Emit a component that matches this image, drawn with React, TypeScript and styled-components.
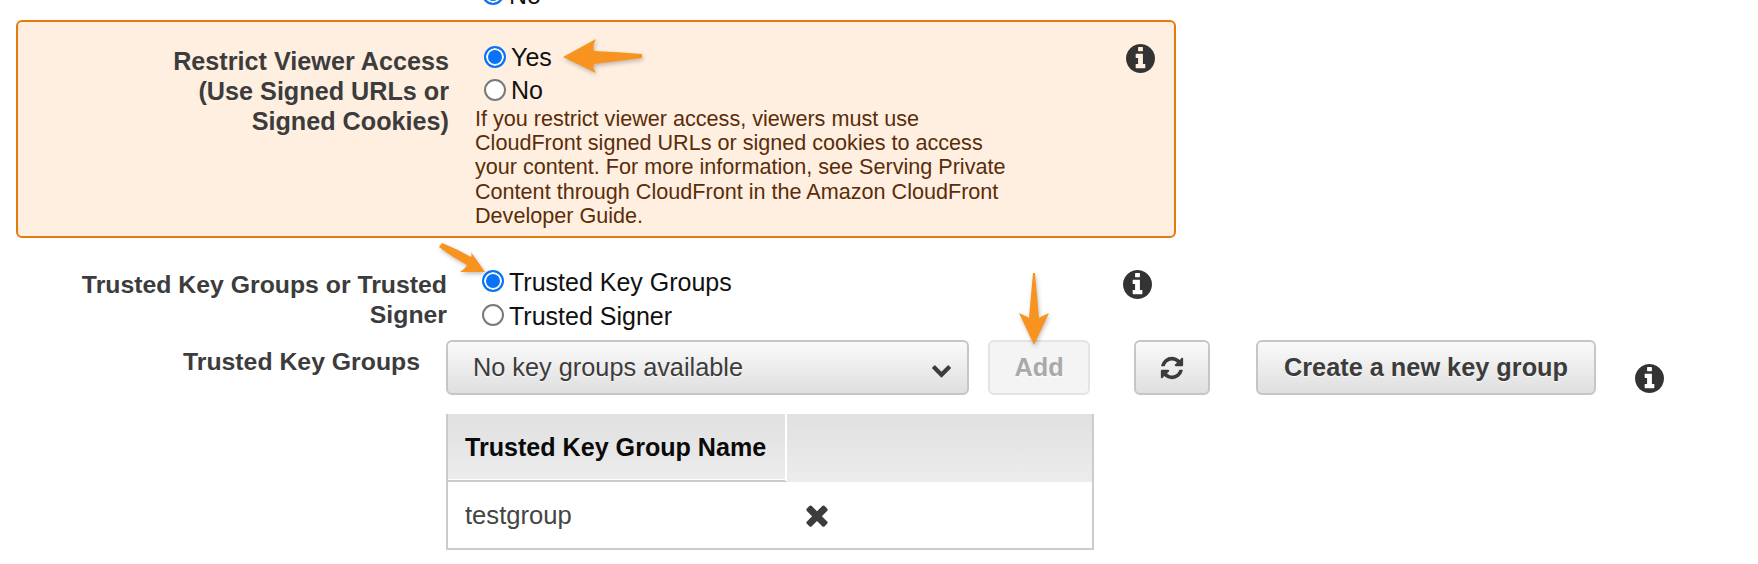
import React from "react";
import styled, { createGlobalStyle } from "styled-components";

const GlobalStyle = createGlobalStyle`
  html, body {
    margin: 0;
    padding: 0;
    background: #fff;
    font-family: "Liberation Sans", Arial, sans-serif;
  }
`;

const ICONS = {
  info: {
    box: "128 128 1536 1536",
    d: "M1152 1376v-160q0-14-9-23t-23-9h-96v-512q0-14-9-23t-23-9h-320q-14 0-23 9t-9 23v160q0 14 9 23t23 9h96v320h-96q-14 0-23 9t-9 23v160q0 14 9 23t23 9h448q14 0 23-9t9-23zm-128-896v-160q0-14-9-23t-23-9h-192q-14 0-23 9t-9 23v160q0 14 9 23t23 9h192q14 0 23-9t9-23zm640 416q0 209-103 385.500t-279.500 279.500-385.500 103-385.500-103-279.500-279.500-103-385.500 103-385.500 279.500-279.500 385.500-103 385.500 103 279.500 279.500 103 385.500z",
  },
  refresh: {
    box: "0 0 1792 1792",
    d: "M1639 1056q0 5-1 7-64 268-268 434.500t-478 166.500q-146 0-282.500-55t-243.500-157l-129 129q-19 19-45 19t-45-19-19-45v-448q0-26 19-45t45-19h448q26 0 45 19t19 45-19 45l-137 137q71 66 161 102t187 36q134 0 250-65t186-179q11-17 53-117 8-23 30-23h192q13 0 22.500 9.500t9.500 22.500zm25-800v448q0 26-19 45t-45 19h-448q-26 0-45-19t-19-45 19-45l138-138q-148-137-349-137-134 0-250 65t-186 179q-11 17-53 117-8 23-30 23h-199q-13 0-22.500-9.500t-9.500-22.500v-7q65-268 270-434.500t480-166.500q146 0 284 55.500t245 156.500l130-129q19-19 45-19t45 19 19 45z",
  },
  times: {
    box: "0 0 1792 1792",
    d: "M1490 1322q0 40-28 68l-136 136q-28 28-68 28t-68-28l-294-294-294 294q-28 28-68 28t-68-28l-136-136q-28-28-28-68t28-68l294-294-294-294q-28-28-28-68t28-68l136-136q28-28 68-28t68 28l294 294 294-294q28-28 68-28t68 28l136 136q28 28 28 68t-28 68l-294 294 294 294q28 28 28 68z",
  },
  chevron: {
    box: "0 0 1792 1792",
    d: "M1683 808l-742 741q-19 19-45 19t-45-19l-742-741q-19-19-19-45.500t19-45.500l166-165q19-19 45-19t45 19l531 531 531-531q19-19 45-19t45 19l166 165q19 19 19 45.500t-19 45.500z",
  },
};

type IconName = keyof typeof ICONS;

function Glyph({ name, className }: { name: IconName; className?: string }) {
  return (
    <svg className={className} viewBox={ICONS[name].box} fill="currentColor">
      <path d={ICONS[name].d} />
    </svg>
  );
}

const Page = styled.div`
  position: relative;
  width: 1758px;
  height: 564px;
  overflow: hidden;
  background: #fff;
`;

const ClippedRow = styled.div`
  height: 5px;
  padding-left: 482px;
  margin-bottom: 15px;
  overflow: hidden;
  display: flex;
  align-items: flex-end;
`;

const Panel = styled.section`
  box-sizing: border-box;
  width: 1160px;
  height: 218px;
  margin-left: 16px;
  padding: 18px 19px 0 0;
  display: flex;
  align-items: flex-start;
  background: #ffefe0;
  border: 2px solid #e57b0c;
  border-radius: 6px;
`;

const Label = styled.div<{ $width: number }>`
  flex: none;
  box-sizing: border-box;
  width: ${(p) => p.$width}px;
  text-align: right;
  font-size: 24.8px;
  line-height: 30px;
  font-weight: 700;
  color: #3c3c3c;
`;

const PanelLabel = styled(Label)`
  margin-top: 6px;
  font-size: 25.2px;
`;

const Field = styled.div<{ $left: number }>`
  flex: none;
  margin-left: ${(p) => p.$left}px;
`;

const RadioRow = styled.label<{ $h: number; $indent?: number }>`
  display: flex;
  align-items: center;
  gap: 5px;
  height: ${(p) => p.$h}px;
  margin-left: ${(p) => p.$indent ?? 0}px;
  font-size: 25px;
  color: #111;
`;

const RadioText = styled.span`
  margin-top: 2px;
`;

const Radio = styled.input.attrs({ type: "radio" })`
  appearance: none;
  box-sizing: border-box;
  flex: none;
  width: 22px;
  height: 22px;
  margin: 0;
  border-radius: 50%;
  background: #fff;
  border: 2px solid #7a7a7a;
  &:checked {
    border-color: #0a72f5;
    background: #0a72f5;
    box-shadow: inset 0 0 0 2px #fff;
  }
`;

const Help = styled.p`
  width: 560px;
  margin: 1px 0 0;
  font-size: 21.6px;
  line-height: 24.2px;
  color: #5a2d0a;
`;

const InfoIcon = styled(Glyph)`
  flex: none;
  width: 29px;
  height: 29px;
  color: #333;
`;

const PanelInfo = styled(InfoIcon)`
  margin-left: auto;
  margin-top: 4px;
`;

const SignerRow = styled.div`
  display: flex;
  align-items: flex-start;
  width: 1152px;
  height: 76px;
  margin-top: 26px;
`;

const SignerLabel = styled(Label)`
  margin-top: 6px;
`;

const SignerInfo = styled(InfoIcon)`
  margin-left: auto;
  margin-top: 6px;
`;

const ControlRow = styled.div`
  display: flex;
  align-items: flex-start;
  height: 55px;
`;

const GroupLabel = styled(Label)`
  margin-top: 7px;
  margin-right: 26px;
`;

const buttonSkin = `
  box-sizing: border-box;
  height: 55px;
  border: 2px solid #c6c6c6;
  border-radius: 6px;
  background: linear-gradient(to bottom, #fafafa, #dfdfdf);
  color: #3c3c3c;
  font-family: "Liberation Sans", Arial, sans-serif;
  text-shadow: 0 1px 1px rgba(255, 255, 255, 0.8);
`;

const Select = styled.div`
  ${buttonSkin}
  width: 523px;
  margin-right: 19px;
  padding: 0 15px 0 25px;
  display: flex;
  align-items: center;
  justify-content: space-between;
  font-size: 25.3px;
  svg {
    width: 21px;
    height: 21px;
    margin-top: 3px;
  }
`;

const Button = styled.button<{ $width: number; $gap: number; $disabled?: boolean }>`
  ${buttonSkin}
  flex: none;
  width: ${(p) => p.$width}px;
  margin-right: ${(p) => p.$gap}px;
  padding: 0;
  display: flex;
  align-items: center;
  justify-content: center;
  font-size: 25.3px;
  font-weight: 700;
  ${(p) =>
    p.$disabled
      ? `
    color: #a9a9a9;
    border-color: #e4e4e4;
    background: #f4f4f4;
  `
      : ""}
  svg {
    width: 26px;
    height: 26px;
  }
`;

const GroupInfo = styled(InfoIcon)`
  margin-left: 39px;
  margin-top: 24px;
`;

const KeyTable = styled.div`
  box-sizing: border-box;
  width: 648px;
  height: 136px;
  margin: 19px 0 0 446px;
  border: solid #ccc;
  border-width: 0 2px 2px 2px;
  display: grid;
  grid-template-columns: 339px 1fr;
  grid-template-rows: 68px 1fr;
`;

const HeadCell = styled.div<{ $ruled?: boolean }>`
  display: flex;
  align-items: center;
  padding-left: 17px;
  background: linear-gradient(to bottom, #e0e0e0, #ececec);
  font-size: 25.1px;
  font-weight: 700;
  color: #0a0a0a;
  ${(p) =>
    p.$ruled
      ? `
    border-right: 2px solid #fff;
    border-bottom: 2px solid #ccc;
    box-shadow: inset 0 -1px 0 #fff;
  `
      : ""}
`;

const Cell = styled.div`
  display: flex;
  align-items: center;
  padding-left: 17px;
  font-size: 25.6px;
  color: #444;
`;

const RemoveIcon = styled(Glyph)`
  width: 32px;
  height: 32px;
  margin-left: -3px;
  color: #3c3c3c;
`;

const ArrowLayer = styled.svg`
  position: absolute;
  left: 0;
  top: 0;
  pointer-events: none;
  filter: drop-shadow(1px 2px 2px rgba(0, 0, 0, 0.25));
`;

export default function App() {
  return (
    <Page>
      <GlobalStyle />
      <ClippedRow>
        <RadioRow $h={22}>
          <Radio name="before" defaultChecked />
          <RadioText>No</RadioText>
        </RadioRow>
      </ClippedRow>

      <Panel>
        <PanelLabel $width={431}>
          Restrict Viewer Access
          <br />
          (Use Signed URLs or
          <br />
          Signed Cookies)
        </PanelLabel>
        <Field $left={26}>
          <RadioRow $h={33} $indent={9}>
            <Radio name="restrict" defaultChecked />
            <RadioText>Yes</RadioText>
          </RadioRow>
          <RadioRow $h={33} $indent={9}>
            <Radio name="restrict" />
            <RadioText>No</RadioText>
          </RadioRow>
          <Help>
            If you restrict viewer access, viewers must use
            <br />
            CloudFront signed URLs or signed cookies to access
            <br />
            your content. For more information, see Serving Private
            <br />
            Content through CloudFront in the Amazon CloudFront
            <br />
            Developer Guide.
          </Help>
        </Field>
        <PanelInfo name="info" />
      </Panel>

      <SignerRow>
        <SignerLabel $width={447}>
          Trusted Key Groups or Trusted
          <br />
          Signer
        </SignerLabel>
        <Field $left={35}>
          <RadioRow $h={34}>
            <Radio name="signer" defaultChecked />
            <RadioText>Trusted Key Groups</RadioText>
          </RadioRow>
          <RadioRow $h={34}>
            <Radio name="signer" />
            <RadioText>Trusted Signer</RadioText>
          </RadioRow>
        </Field>
        <SignerInfo name="info" />
      </SignerRow>

      <ControlRow>
        <GroupLabel $width={420}>Trusted Key Groups</GroupLabel>
        <Select>
          No key groups available
          <Glyph name="chevron" />
        </Select>
        <Button $width={102} $gap={44} $disabled>
          Add
        </Button>
        <Button $width={76} $gap={46}>
          <Glyph name="refresh" />
        </Button>
        <Button $width={340} $gap={0}>
          Create a new key group
        </Button>
        <GroupInfo name="info" />
      </ControlRow>

      <KeyTable>
        <HeadCell $ruled>Trusted Key Group Name</HeadCell>
        <HeadCell />
        <Cell>testgroup</Cell>
        <Cell>
          <RemoveIcon name="times" />
        </Cell>
      </KeyTable>

      <ArrowLayer width="1758" height="564" viewBox="0 0 1758 564">
        <path
          fill="#f7931e"
          d="M563 57 L596 39 Q592 47 594 51 Q618 52 642 54 L642 58 Q618 61 594 64 Q592 67 596 73 Z"
        />
        <path
          fill="#f7931e"
          d="M485 272 L460 272 Q466 268 467 265 Q452 257 439 247 L442 243 Q457 249 471 257 Q472 255 471 252 Z"
        />
        <path
          fill="#f7931e"
          d="M1034 345 L1019 313 Q1026 316 1029 318 Q1031 295 1033 273 L1035 273 Q1037 295 1039 318 Q1042 316 1049 313 Z"
        />
      </ArrowLayer>
    </Page>
  );
}
